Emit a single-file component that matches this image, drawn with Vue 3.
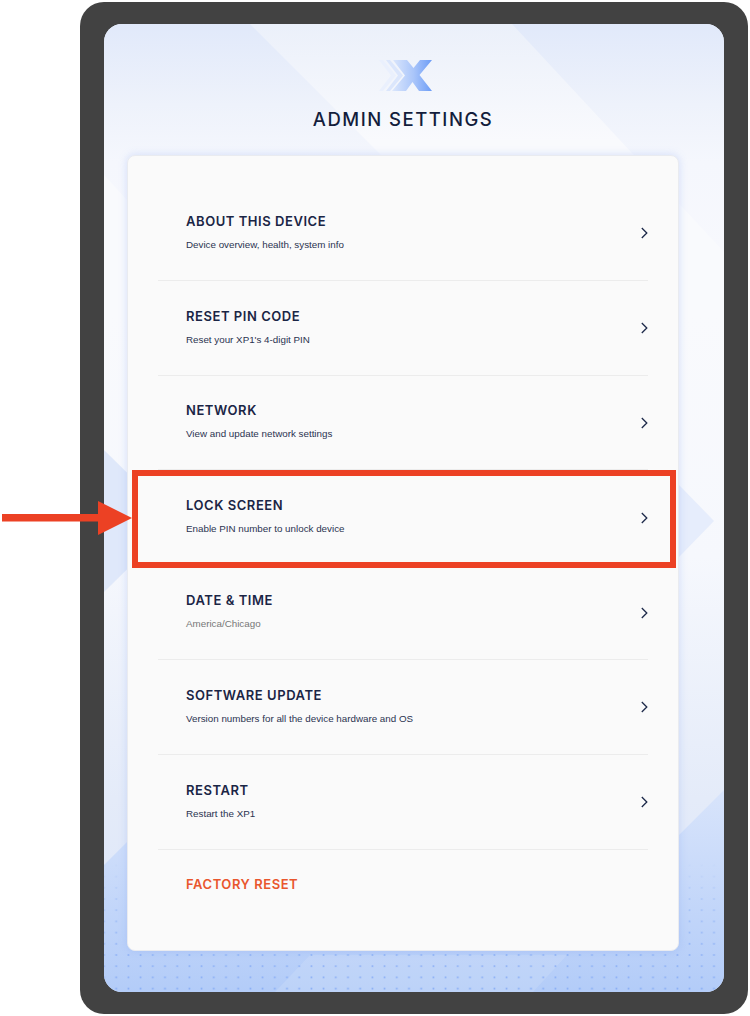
<script setup>
const rows = [
  { title: 'ABOUT THIS DEVICE', sub: 'Device overview, health, system info' },
  { title: 'RESET PIN CODE', sub: "Reset your XP1's 4-digit PIN" },
  { title: 'NETWORK', sub: 'View and update network settings' },
  { title: 'LOCK SCREEN', sub: 'Enable PIN number to unlock device' },
  { title: 'DATE & TIME', sub: 'America/Chicago', muted: true },
  { title: 'SOFTWARE UPDATE', sub: 'Version numbers for all the device hardware and OS' },
  { title: 'RESTART', sub: 'Restart the XP1' },
]
</script>

<template>
  <div class="page">
    <div class="device">
      <div class="screen">
        <svg class="backdrop" width="620" height="968" viewBox="0 0 620 968">
          <defs>
            <linearGradient id="bgGrad" gradientUnits="userSpaceOnUse" x1="0" y1="0" x2="0" y2="968">
              <stop offset="0" stop-color="#ebf0fa" />
              <stop offset="0.12" stop-color="#f9fafd" />
              <stop offset="0.3" stop-color="#f9fafd" />
              <stop offset="0.55" stop-color="#f6f8fd" />
              <stop offset="0.8" stop-color="#e4ebf9" />
              <stop offset="1" stop-color="#dbe5f9" />
            </linearGradient>
            <linearGradient id="topBlue" gradientUnits="userSpaceOnUse" x1="0" y1="0" x2="0" y2="230">
              <stop offset="0" stop-color="#e1e9fa" />
              <stop offset="0.35" stop-color="#eef2fb" />
              <stop offset="0.6" stop-color="#f5f7fd" />
              <stop offset="1" stop-color="#f7f8fd" />
            </linearGradient>
            <linearGradient id="lowBlue" gradientUnits="userSpaceOnUse" x1="0" y1="766" x2="0" y2="968">
              <stop offset="0" stop-color="#d8e4fb" />
              <stop offset="1" stop-color="#b3ccf8" />
            </linearGradient>
            <pattern id="dots" x="-6.1" y="-4.2" width="12.2" height="11.2" patternUnits="userSpaceOnUse">
              <circle cx="6.1" cy="5.6" r="1" fill="#85abf5" />
            </pattern>
            <linearGradient id="fade" gradientUnits="userSpaceOnUse" x1="0" y1="835" x2="0" y2="968">
              <stop offset="0" stop-color="#fff" stop-opacity="0" />
              <stop offset="0.5" stop-color="#fff" stop-opacity="0.65" />
              <stop offset="1" stop-color="#fff" stop-opacity="1" />
            </linearGradient>
            <mask id="dotMask" maskUnits="userSpaceOnUse" x="0" y="835" width="620" height="133">
              <rect x="0" y="835" width="620" height="133" fill="url(#fade)" />
            </mask>
          </defs>
          <rect width="620" height="968" fill="url(#bgGrad)" />
          <polygon points="0,0 146,0 281,135 23,135 23,176 0,151" fill="url(#topBlue)" />
          <polygon points="408,0 620,0 620,228" fill="url(#topBlue)" />
          <polygon points="0,426 72,497 0,568" fill="#dfe8fa" />
          <polygon points="575,461 610,497 575,533" fill="#e6edfc" />
          <polygon points="0,841 23,818 575,811 620,766 620,968 0,968" fill="url(#lowBlue)" />
          <polygon points="171,968 206,931 463,931 429,968" fill="#ffffff" opacity="0.12" />
          <rect x="0" y="835" width="620" height="133" fill="url(#dots)" mask="url(#dotMask)" />
        </svg>

        <div class="column">
          <header class="head">
            <svg class="logo" width="54" height="32" viewBox="0 0 54 32">
              <defs>
                <linearGradient id="logoGrad" gradientUnits="userSpaceOnUse" x1="13" y1="0" x2="53" y2="0">
                  <stop offset="0" stop-color="#dce7fc" />
                  <stop offset="0.55" stop-color="#a9c5fa" />
                  <stop offset="1" stop-color="#6c9cf6" />
                </linearGradient>
              </defs>
              <polygon points="0,0 4,0 17,15.5 4,31 0,31 12,15.5" fill="#eaf0fd" />
              <polygon points="7,0 11,0 24,15.5 11,31 7,31 19,15.5" fill="#dbe6fc" />
              <polygon points="14,0 28,0 34.5,8 41,0 53,0 40.5,15 53,31 40,31 33.5,22 27,31 13,31 26,15.5" fill="url(#logoGrad)" />
            </svg>
            <h1 class="page-title">ADMIN SETTINGS</h1>
          </header>

          <main class="card">
            <div v-for="row in rows" :key="row.title" class="row">
              <div class="row-text">
                <div class="row-title">{{ row.title }}</div>
                <div class="row-sub" :class="{ muted: row.muted }">{{ row.sub }}</div>
              </div>
              <svg class="chev" width="8" height="12" viewBox="0 0 8 12">
                <path d="M1.8 1 L6.8 6 L1.8 11" fill="none" stroke="#1d2a4a" stroke-width="1.3" />
              </svg>
            </div>
            <div class="row last">
              <div class="row-title danger">FACTORY RESET</div>
            </div>
          </main>
        </div>
      </div>
    </div>

    <div class="highlight"></div>
    <svg class="arrow" width="132" height="34" viewBox="0 0 132 34">
      <rect x="2" y="13" width="98" height="7.5" fill="#ec4124" />
      <polygon points="98,0 132,17 98,34" fill="#ec4124" />
    </svg>
  </div>
</template>

<style scoped>
.page {
  position: relative;
  width: 750px;
  height: 1016px;
  background: #fff;
  overflow: hidden;
  padding: 2px 2px 2px 80px;
  box-sizing: border-box;
}
.device {
  box-sizing: border-box;
  width: 668px;
  height: 1012px;
  background: #424242;
  border-radius: 24px;
  padding: 22px 24px;
}
.screen {
  position: relative;
  width: 620px;
  height: 968px;
  border-radius: 18px;
  overflow: hidden;
}
.backdrop {
  position: absolute;
  left: 0;
  top: 0;
}
.column {
  position: relative;
  width: 552px;
  margin-left: 23px;
}
.head {
  height: 131px;
  display: flex;
  flex-direction: column;
  align-items: center;
}
.logo {
  margin-top: 36px;
  margin-left: 5px;
  flex: none;
}
.page-title {
  margin: 15px 0 0;
  font: 500 18.5px/24px "Inter", "Open Sans", sans-serif;
  letter-spacing: 1.5px;
  color: #131d3c;
  white-space: nowrap;
}
.card {
  box-sizing: border-box;
  height: 796px;
  background: #fafafa;
  border-radius: 8px;
  border: 1px solid #e9ebf0;
  box-shadow: 0 0 8px rgba(120, 155, 240, 0.28);
  padding: 30px 30px 0;
}
.row {
  box-sizing: border-box;
  height: 94.8px;
  padding: 0 0 1px 28px;
  display: flex;
  align-items: center;
  justify-content: space-between;
  border-bottom: 1px solid #ececec;
}
.row.last {
  border-bottom: none;
  height: 70px;
}
.row-title {
  font: 600 13px/16px "Inter", sans-serif;
  letter-spacing: 0.55px;
  color: #1a2545;
}
.row-title.danger {
  color: #e9562d;
}
.row-sub {
  margin-top: 9px;
  font: 400 9.8px/14px "Liberation Sans", Arial, sans-serif;
  color: #2a3350;
}
.row-sub.muted {
  color: #777;
}
.chev {
  margin-top: 2px;
}
.highlight {
  position: absolute;
  left: 132px;
  top: 470px;
  width: 544px;
  height: 98px;
  box-sizing: border-box;
  border: 6px solid #ec4124;
}
.arrow {
  position: absolute;
  left: 0;
  top: 501px;
}
</style>
